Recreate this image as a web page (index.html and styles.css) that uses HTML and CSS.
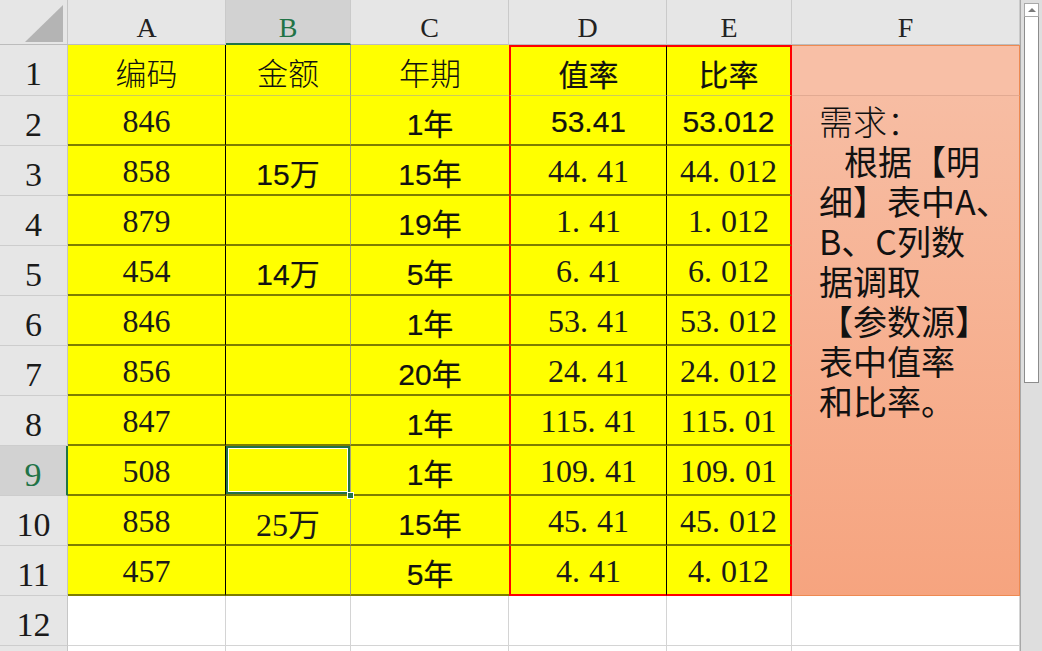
FILE: index.html
```html
<!DOCTYPE html>
<html lang="zh-CN">
<head>
<meta charset="utf-8">
<title>Sheet</title>
<link rel="stylesheet" href="styles.css">
</head>
<body>
<div class="sheet">
  <div class="sb"><div class="sb-up"><span class="sb-arrow"></span></div><div class="sb-thumb"></div></div>

  <div class="c corner"><span class="tri"></span></div>
  <div class="c ch">A</div>
  <div class="c ch csel">B</div>
  <div class="c ch">C</div>
  <div class="c ch">D</div>
  <div class="c ch">E</div>
  <div class="c ch">F</div>

  <div class="c rh">1</div>
  <div class="c y r1 ca hz">编码</div>
  <div class="c y r1 cb hz">金额</div>
  <div class="c y r1 cc hz">年期</div>
  <div class="c y r1 cd top sans">值率</div>
  <div class="c y r1 ce top sans">比率</div>
  <div class="c f1"></div>

  <div class="c rh">2</div>
  <div class="c y ca num">846</div>
  <div class="c y cb"></div>
  <div class="c y cc sans">1年</div>
  <div class="c y cd sans">53.41</div>
  <div class="c y ce sans">53.012</div>
  <div class="c note">
    <div class="ln lead">需求：</div>
    <div class="ln"><span class="ind"></span>根据【明</div>
    <div class="ln">细】表中A、</div>
    <div class="ln">B、C列数</div>
    <div class="ln">据调取</div>
    <div class="ln">【参数源】</div>
    <div class="ln">表中值率</div>
    <div class="ln">和比率。</div>
  </div>

  <div class="c rh">3</div>
  <div class="c y ca num">858</div>
  <div class="c y cb sans">15万</div>
  <div class="c y cc sans">15年</div>
  <div class="c y cd num">44<span class="pt">.</span>41</div>
  <div class="c y ce num">44<span class="pt">.</span>012</div>

  <div class="c rh">4</div>
  <div class="c y ca num">879</div>
  <div class="c y cb"></div>
  <div class="c y cc sans">19年</div>
  <div class="c y cd num">1<span class="pt">.</span>41</div>
  <div class="c y ce num">1<span class="pt">.</span>012</div>

  <div class="c rh">5</div>
  <div class="c y ca num">454</div>
  <div class="c y cb sans">14万</div>
  <div class="c y cc sans">5年</div>
  <div class="c y cd num">6<span class="pt">.</span>41</div>
  <div class="c y ce num">6<span class="pt">.</span>012</div>

  <div class="c rh">6</div>
  <div class="c y ca num">846</div>
  <div class="c y cb"></div>
  <div class="c y cc sans">1年</div>
  <div class="c y cd num">53<span class="pt">.</span>41</div>
  <div class="c y ce num">53<span class="pt">.</span>012</div>

  <div class="c rh">7</div>
  <div class="c y ca num">856</div>
  <div class="c y cb"></div>
  <div class="c y cc sans">20年</div>
  <div class="c y cd num">24<span class="pt">.</span>41</div>
  <div class="c y ce num">24<span class="pt">.</span>012</div>

  <div class="c rh">8</div>
  <div class="c y ca num">847</div>
  <div class="c y cb"></div>
  <div class="c y cc sans">1年</div>
  <div class="c y cd num">115<span class="pt">.</span>41</div>
  <div class="c y ce num">115<span class="pt">.</span>01</div>

  <div class="c rh rsel">9</div>
  <div class="c y ca num">508</div>
  <div class="c y cb active"><span class="handle"></span></div>
  <div class="c y cc sans">1年</div>
  <div class="c y cd num">109<span class="pt">.</span>41</div>
  <div class="c y ce num">109<span class="pt">.</span>01</div>

  <div class="c rh">10</div>
  <div class="c y ca num">858</div>
  <div class="c y cb num">25万</div>
  <div class="c y cc sans">15年</div>
  <div class="c y cd num">45<span class="pt">.</span>41</div>
  <div class="c y ce num">45<span class="pt">.</span>012</div>

  <div class="c rh">11</div>
  <div class="c y ca num">457</div>
  <div class="c y cb"></div>
  <div class="c y cc sans">5年</div>
  <div class="c y cd last num">4<span class="pt">.</span>41</div>
  <div class="c y ce last num">4<span class="pt">.</span>012</div>

  <div class="c rh">12</div>
  <div class="c"></div>
  <div class="c"></div>
  <div class="c"></div>
  <div class="c"></div>
  <div class="c"></div>
  <div class="c"></div>

  <div class="c rh tail"></div>
  <div class="c tail"></div>
  <div class="c tail"></div>
  <div class="c tail"></div>
  <div class="c tail"></div>
  <div class="c tail"></div>
  <div class="c tail"></div>
</div>
</body>
</html>
```

FILE: styles.css
```css
html, body {
  margin: 0;
  padding: 0;
}
body {
  width: 1042px;
  height: 651px;
  overflow: hidden;
  background: #fff;
  font-family: "Liberation Serif", "Noto Sans CJK SC", serif;
  color: #111;
}
.sheet {
  display: grid;
  grid-template-columns: 68px 158px 125px 158px 158px 125px 228px 22px;
  grid-template-rows: 45px 51px repeat(11, 50px) 5px;
}
.c {
  box-sizing: border-box;
  display: flex;
  align-items: center;
  justify-content: center;
  min-width: 0;
  overflow: hidden;
  white-space: nowrap;
  border-right: 1px solid #d4d4d4;
  border-bottom: 1px solid #d4d4d4;
  font-size: 32px;
  padding-top: 3px;
}

/* corner */
.corner {
  background: #e6e6e6;
  border-right: 1px solid #c6c6c6;
  border-bottom: 1px solid #bcbcbc;
  align-items: flex-end;
  justify-content: flex-end;
  padding: 0 4px 2px 0;
}
.tri {
  width: 38px;
  height: 37px;
  background: #b4b4b4;
  clip-path: polygon(100% 0, 100% 100%, 0 100%);
}

/* column headers */
.ch {
  background: #e6e6e6;
  border-right: 1px solid #cacaca;
  border-bottom: 1px solid #bcbcbc;
  font-size: 28px;
  color: #222;
  padding-top: 12px;
}
.csel {
  background: #d2d2d2;
  color: #217346;
  border-bottom: 2px solid #217346;
}

/* row headers */
.rh {
  background: #e6e6e6;
  border-right: 1px solid #c6c6c6;
  border-bottom: 1px solid #cdcdcd;
  font-size: 34px;
  color: #1a1a1a;
  padding-top: 8px;
}
.rsel {
  background: #d2d2d2;
  color: #217346;
  border-right: 2px solid #217346;
}

/* yellow data area */
.y {
  background: #ffff00;
  border-bottom: 2px solid #7d7d00;
}
.r1 {
  border-bottom: 1px solid #cccc5a;
}
.ca { border-right: 1px solid #000; }
.cb { border-right: 1px solid #a4a47c; }
.cc { border-right: 0; }
.cd {
  border-left: 2px solid #ff0000;
  border-right: 1px solid #000;
}
.ce { border-right: 2px solid #ff0000; }
.top { border-top: 2px solid #ff0000; }
.last { border-bottom: 2px solid #ff0000; }

.hz {
  font-family: "Noto Sans CJK SC", sans-serif;
  font-weight: 300;
  font-size: 31px;
}
.sans {
  font-family: "Liberation Sans", "Noto Sans CJK SC", sans-serif;
  font-size: 30px;
  -webkit-text-stroke: 0.2px #111;
}
.num {
  font-family: "Liberation Serif", "Noto Sans CJK SC", serif;
  font-size: 32px;
  color: #1a1a1a;
}
.pt { margin-right: 9px; }

/* active cell */
.active {
  position: relative;
  overflow: visible;
  box-shadow: inset 0 0 0 2px #217346, inset 0 0 0 3px #ffffff;
}
.handle {
  position: absolute;
  right: -4px;
  bottom: -5px;
  width: 5px;
  height: 5px;
  background: #217346;
  border: 1px solid #fff;
}

/* F column */
.f1 {
  background: #f8bfa6;
  border-top: 1px solid #ee8a52;
  border-right: 1px solid #ee8a52;
  border-bottom: 1px solid #e2aa92;
}
.note {
  grid-column: 7;
  grid-row: 3 / span 10;
  display: flex;
  flex-direction: column;
  align-items: flex-start;
  justify-content: flex-start;
  background: linear-gradient(#f7bda3, #f6a47f);
  border-right: 1px solid #ee8a52;
  border-bottom: 1px solid #ee8a52;
  padding: 5px 0 0 27px;
  font-family: "Noto Sans CJK SC", sans-serif;
  font-size: 34px;
  color: #111;
}
.ln {
  height: 40px;
  line-height: 40px;
}
.lead { font-weight: 300; }
.ind {
  display: inline-block;
  width: 25px;
}

.tail { border-bottom: 0; }

/* scrollbar */
.sb {
  grid-column: 8;
  grid-row: 1 / -1;
  box-sizing: border-box;
  background: #dedede;
  border-left: 1px solid #a8a8a8;
  display: flex;
  flex-direction: column;
  align-items: flex-start;
  padding: 3px 0 0 3px;
}
.sb-up {
  box-sizing: border-box;
  width: 15px;
  height: 14px;
  background: #fff;
  border: 1px solid #a8a8a8;
  display: flex;
  align-items: center;
  justify-content: center;
}
.sb-arrow {
  width: 0;
  height: 0;
  border-left: 4px solid transparent;
  border-right: 4px solid transparent;
  border-bottom: 4px solid #7a7a7a;
}
.sb-thumb {
  box-sizing: border-box;
  width: 15px;
  height: 366px;
  background: #fff;
  border: 1px solid #8c8c8c;
  border-top: 0;
}
```
